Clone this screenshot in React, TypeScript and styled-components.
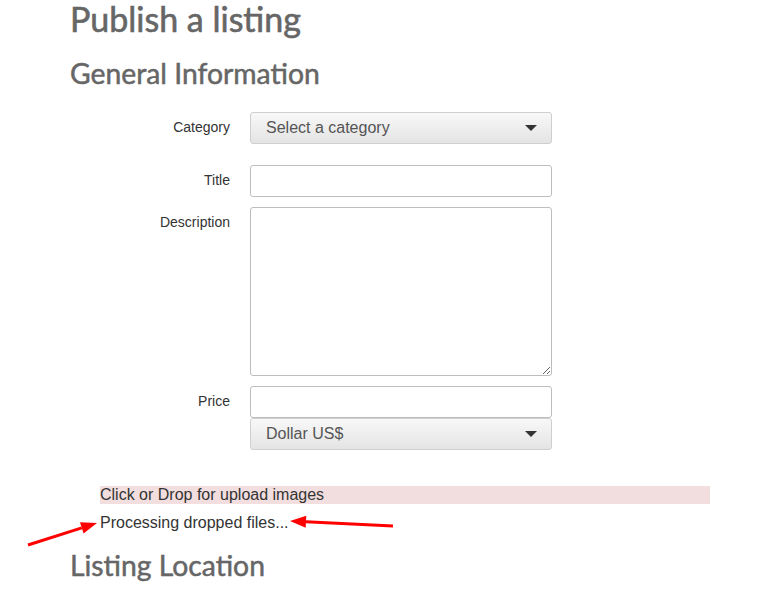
import styled, { createGlobalStyle } from 'styled-components'

const GlobalStyle = createGlobalStyle`
  html, body {
    margin: 0;
    padding: 0;
    background: #fff;
  }
  * {
    box-sizing: border-box;
  }
`

const Page = styled.div`
  position: relative;
  width: 757px;
  height: 600px;
  overflow: hidden;
  padding-left: 70px;
  font-family: "Liberation Sans", Arial, sans-serif;
  color: #333;
`

const PageTitle = styled.h1`
  margin: 0;
  font-family: Lato, "Open Sans", sans-serif;
  font-weight: 400;
  font-size: 34px;
  line-height: 38px;
  color: #666;
  -webkit-text-stroke: 0.6px #666;
`

const SectionTitle = styled.h2<{ $top: number }>`
  margin: ${({ $top }) => $top}px 0 0;
  font-family: Lato, "Open Sans", sans-serif;
  font-weight: 400;
  font-size: 28.3px;
  line-height: 32px;
  color: #666;
  -webkit-text-stroke: 0.5px #666;
`

const Form = styled.div`
  margin-top: 23px;
  display: flex;
  flex-direction: column;
`

const Row = styled.div<{ $gap: number }>`
  display: grid;
  grid-template-columns: 160px 302px;
  column-gap: 20px;
  margin-top: ${({ $gap }) => $gap}px;
`

const Label = styled.label`
  text-align: right;
  padding-top: 5px;
  font-size: 14px;
  line-height: 20px;
  color: #333;
`

const Field = styled.div`
  display: flex;
  flex-direction: column;
`

const Select = styled.div`
  height: 32px;
  display: flex;
  align-items: center;
  justify-content: space-between;
  padding: 0 14px 0 15px;
  border: 1px solid #cfcfcf;
  border-radius: 3px;
  background: linear-gradient(#f8f8f8, #e4e4e4);
  font-size: 16px;
  color: #555;
`

const Caret = styled.span`
  width: 0;
  height: 0;
  border-left: 6px solid transparent;
  border-right: 6px solid transparent;
  border-top: 6px solid #333;
`

const Input = styled.input`
  height: 32px;
  width: 100%;
  padding: 0 10px;
  border: 1px solid #bdbdbd;
  border-radius: 3px;
  font-size: 16px;
  font-family: inherit;
  outline: none;
`

const TextArea = styled.textarea`
  display: block;
  height: 169px;
  width: 100%;
  padding: 6px 10px;
  border: 1px solid #bdbdbd;
  border-radius: 3px;
  font-family: inherit;
  font-size: 16px;
  resize: vertical;
  outline: none;
`

const DropZone = styled.div`
  margin: 36px 0 0 30px;
  width: 610px;
  height: 18px;
  background: #f2dede;
  font-size: 16px;
  line-height: 18px;
  color: #333;
`

const Status = styled.div`
  margin: 10px 0 0 30px;
  font-size: 16px;
  line-height: 18px;
  color: #333;
`

const Annotations = styled.svg`
  position: absolute;
  left: 0;
  top: 0;
  pointer-events: none;
`

const Arrow = ({ x1, y1, x2, y2 }: { x1: number; y1: number; x2: number; y2: number }) => {
  const a = Math.atan2(y2 - y1, x2 - x1)
  const len = 16
  const w = 6
  const bx = x2 - len * Math.cos(a)
  const by = y2 - len * Math.sin(a)
  const px = -Math.sin(a) * w
  const py = Math.cos(a) * w
  return (
    <g>
      <line x1={x1} y1={y1} x2={bx} y2={by} stroke="#f00" strokeWidth={3} />
      <polygon points={`${x2},${y2} ${bx + px},${by + py} ${bx - px},${by - py}`} fill="#f00" />
    </g>
  )
}

export default function App() {
  return (
    <>
      <GlobalStyle />
      <Page>
        <PageTitle>Publish a listing</PageTitle>
        <SectionTitle $top={19}>General Information</SectionTitle>
        <Form>
          <Row $gap={0}>
            <Label>Category</Label>
            <Select>
              Select a category
              <Caret />
            </Select>
          </Row>
          <Row $gap={21}>
            <Label>Title</Label>
            <Input />
          </Row>
          <Row $gap={10}>
            <Label>Description</Label>
            <TextArea />
          </Row>
          <Row $gap={10}>
            <Label>Price</Label>
            <Field>
              <Input />
              <Select>
                Dollar US$
                <Caret />
              </Select>
            </Field>
          </Row>
        </Form>
        <DropZone>Click or Drop for upload images</DropZone>
        <Status>Processing dropped files...</Status>
        <SectionTitle $top={17}>Listing Location</SectionTitle>
        <Annotations width={757} height={600}>
          <Arrow x1={28} y1={545} x2={97} y2={523} />
          <Arrow x1={393} y1={526} x2={290} y2={521} />
        </Annotations>
      </Page>
    </>
  )
}
